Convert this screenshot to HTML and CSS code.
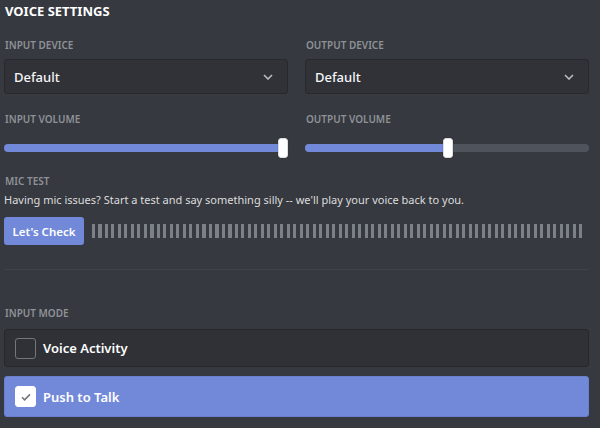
FILE: index.html
```html
<!DOCTYPE html>
<html lang="en">
<head>
<meta charset="UTF-8">
<meta name="viewport" content="width=device-width, initial-scale=1.0">
<title>Voice Settings</title>
<link rel="stylesheet" href="styles.css">
</head>
<body>

<div class="page">
  <h1>Voice Settings</h1>

  <div class="cols">
    <div>
      <div class="label">Input Device</div>
      <div class="select">
        <span>Default</span>
        <svg width="10" height="6" viewBox="0 0 10 6"><path d="M1 1l4 4 4-4" fill="none" stroke="#b9bbbe" stroke-width="1.6"/></svg>
      </div>
    </div>
    <div>
      <div class="label">Output Device</div>
      <div class="select">
        <span>Default</span>
        <svg width="10" height="6" viewBox="0 0 10 6"><path d="M1 1l4 4 4-4" fill="none" stroke="#b9bbbe" stroke-width="1.6"/></svg>
      </div>
    </div>
  </div>

  <div class="cols vol">
    <div>
      <div class="label">Input Volume</div>
      <div class="slider">
        <div class="track"><div class="fill" style="width: 100%"></div></div>
        <div class="knob" style="left: 274px"></div>
      </div>
    </div>
    <div>
      <div class="label">Output Volume</div>
      <div class="slider">
        <div class="track"><div class="fill" style="width: 50%"></div></div>
        <div class="knob" style="left: 138px"></div>
      </div>
    </div>
  </div>

  <div class="label mic">Mic Test</div>
  <p class="hint">Having mic issues? Start a test and say something silly -- we'll play your voice back to you.</p>
  <div class="mic-row">
    <button class="btn">Let's Check</button>
    <div class="bars"></div>
  </div>

  <div class="divider"></div>

  <div class="label mode">Input Mode</div>
  <div class="option">
    <span class="box"></span>
    <span>Voice Activity</span>
  </div>
  <div class="option active">
    <span class="box">
      <svg width="14" height="14" viewBox="0 0 14 14"><path d="M3 7.2l2.6 2.6L11 4.4" fill="none" stroke="#72767d" stroke-width="1.6"/></svg>
    </span>
    <span>Push to Talk</span>
  </div>
</div>

</body>
</html>
```

FILE: styles.css
```css
body {
  margin: 0;
  background-color: #36393f;
  font-family: "Noto Sans", Arial, sans-serif;
  color: #dcddde;
}
.page {
  padding: 2px 11px 0 4px;
}
h1 {
  margin: 0 0 0 1px;
  font-size: 13px;
  line-height: 18px;
  font-weight: 700;
  text-transform: uppercase;
  color: #fff;
}
.cols {
  display: grid;
  grid-template-columns: 284px 284px;
  gap: 17px;
  margin-top: 19px;
}
.label {
  font-size: 10px;
  line-height: 12px;
  font-weight: 600;
  text-transform: uppercase;
  color: #8e9297;
  margin-left: 1px;
}
.select {
  margin-top: 8px;
  height: 35px;
  box-sizing: border-box;
  background-color: #303237;
  border: 1px solid #28292d;
  border-radius: 3px;
  display: flex;
  align-items: center;
  justify-content: space-between;
  padding: 0 14px 0 9px;
  font-size: 13px;
  font-weight: 500;
  color: #f6f6f7;
}
.vol {
  margin-top: 19px;
}
.slider {
  position: relative;
  margin-top: 13px;
  height: 20px;
}
.track {
  position: absolute;
  left: 0;
  right: 0;
  top: 6px;
  height: 8px;
  background-color: #4f545c;
  border-radius: 4px;
  overflow: hidden;
}
.fill {
  height: 100%;
  background-color: #7289da;
}
.knob {
  position: absolute;
  top: 0;
  width: 10px;
  height: 20px;
  box-sizing: border-box;
  background-color: #fff;
  border: 1px solid #dcddde;
  border-radius: 3px;
  box-shadow: 0 0 1px rgba(0, 0, 0, 0.5);
}
.mic {
  margin-top: 17px;
}
.hint {
  margin: 5px 0 0;
  font-size: 11px;
  line-height: 16px;
  color: #dcddde;
}
.mic-row {
  margin-top: 9px;
  display: flex;
  align-items: center;
  gap: 8px;
}
.btn {
  width: 80px;
  height: 28px;
  border: none;
  border-radius: 3px;
  background-color: #7289da;
  color: #fff;
  font-family: "Noto Sans", Arial, sans-serif;
  font-size: 11.5px;
  font-weight: 600;
  padding: 0;
}
.bars {
  flex: 1;
  margin-right: 3px;
  height: 14px;
  background: repeating-linear-gradient(90deg, #7c8087 0, #7c8087 3px, transparent 3px, transparent 6.5px);
}
.divider {
  margin-top: 24px;
  height: 1px;
  background-color: #40434a;
}
.mode {
  margin-top: 37px;
}
.option {
  margin-top: 10px;
  height: 38px;
  box-sizing: border-box;
  background-color: #2f3136;
  border: 1px solid #26272b;
  border-radius: 3px;
  display: flex;
  align-items: center;
  gap: 7px;
  padding-left: 10px;
  font-size: 13px;
  font-weight: 600;
  color: #fff;
}
.option.active {
  margin-top: 9px;
  height: 41px;
  background-color: #7289da;
  border-color: #6a80cc;
}
.box {
  width: 21px;
  height: 21px;
  box-sizing: border-box;
  border: 1px solid #72767d;
  border-radius: 3px;
  display: flex;
  align-items: center;
  justify-content: center;
}
.active .box {
  background-color: #fff;
  border-color: #fff;
}
```
